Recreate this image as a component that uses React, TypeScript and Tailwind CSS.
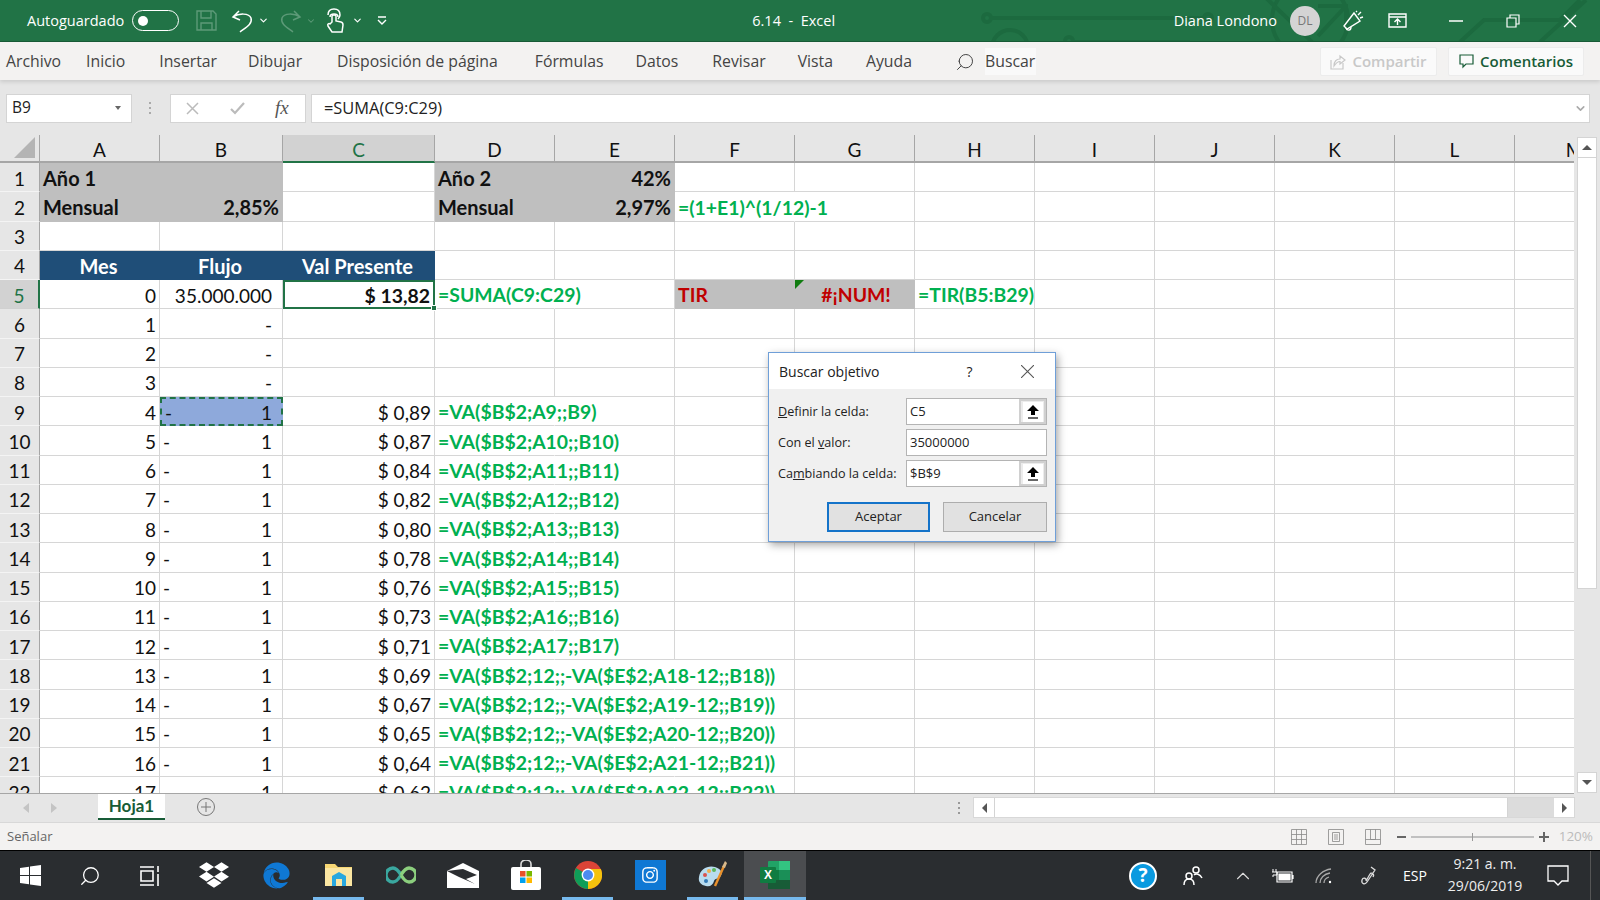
import type { ReactNode } from "react";
import { ChevronDown, ChevronUp, Search } from "lucide-react";
import { FaDropbox, FaEdge, FaInstagram } from "react-icons/fa";

const ui = "font-['Open_Sans',sans-serif]";
const sheetFont = "font-['Lato',sans-serif]";

const tabs = [
  { label: "Archivo", cls: "ml-[6px]" },
  { label: "Inicio", cls: "ml-[25px]" },
  { label: "Insertar", cls: "ml-[34px]" },
  { label: "Dibujar", cls: "ml-[31px]" },
  { label: "Disposición de página", cls: "ml-[35px]" },
  { label: "Fórmulas", cls: "ml-[37px]" },
  { label: "Datos", cls: "ml-[32px]" },
  { label: "Revisar", cls: "ml-[34px]" },
  { label: "Vista", cls: "ml-[32px]" },
  { label: "Ayuda", cls: "ml-[33px]" },
];

const columns = ["A", "B", "C", "D", "E", "F", "G", "H", "I", "J", "K", "L", "M"];
const gridCols = "grid-cols-[40px_120px_123px_152px_120px_120px_120px_120px_120px_120px_120px_120px_120px_120px]";

type Cell = { text?: ReactNode; cls?: string };

const green = "text-[#00b050] text-[19.4px] font-bold";
const grey = "bg-[#bfbfbf] border-[#bfbfbf]!";
const greyLabel = `${grey} text-[20px] font-bold`;
const navy = "bg-[#1f4e78] border-[#1f4e78]! text-white text-[20px] font-bold justify-center pr-[5px]";
const num = "justify-end pr-[3px]";
const noRight = "border-r-transparent!";

const cells: Record<string, Cell> = {
  A1: { text: "Año 1", cls: greyLabel },
  B1: { cls: grey },
  D1: { text: "Año 2", cls: greyLabel },
  E1: { text: "42%", cls: `${greyLabel} ${num}` },
  A2: { text: "Mensual", cls: greyLabel },
  B2: { text: "2,85%", cls: `${greyLabel} ${num}` },
  D2: { text: "Mensual", cls: greyLabel },
  E2: { text: "2,97%", cls: `${greyLabel} ${num}` },
  F2: { text: "=(1+E1)^(1/12)-1", cls: `${green} ${noRight}` },
  A4: { text: "Mes", cls: navy },
  B4: { text: "Flujo", cls: navy },
  C4: { text: "Val Presente", cls: navy },
  A5: { text: "0", cls: num },
  B5: { text: "35.000.000", cls: "justify-end pr-[10px]" },
  D5: { text: "=SUMA(C9:C29)", cls: `${green} ${noRight}` },
  F5: { text: "TIR", cls: `${grey} text-[#c00000] text-[19.4px] font-bold` },
  G5: {
    text: (
      <>
        <span className="absolute left-0 top-0 h-0 w-0 border-r-[9px] border-t-[9px] border-r-transparent border-t-[#107c10]" />
        #¡NUM!
      </>
    ),
    cls: `${grey} text-[#c00000] text-[19.4px] font-bold justify-center`,
  },
  H5: { text: "=TIR(B5:B29)", cls: green },
};

["1", "2", "3"].forEach((n, i) => {
  cells[`A${6 + i}`] = { text: n, cls: num };
  cells[`B${6 + i}`] = { text: "-", cls: "justify-end pr-[10px]" };
});

const presents = ["0,89", "0,87", "0,84", "0,82", "0,80", "0,78", "0,76", "0,73", "0,71", "0,69", "0,67", "0,65", "0,64", "0,62"];
presents.forEach((v, i) => {
  const r = 9 + i;
  cells[`A${r}`] = { text: String(4 + i), cls: num };
  cells[`B${r}`] = {
    text: (
      <>
        <span>-</span>
        <span>1</span>
      </>
    ),
    cls:
      r === 9
        ? "justify-between pr-[9px] bg-[#8ea9db] border-2! border-dashed! border-[#217346]!"
        : "justify-between pr-[10px]",
  };
  cells[`C${r}`] = { text: `$ ${v}`, cls: num };
  cells[`D${r}`] =
    r < 18
      ? { text: `=VA($B$2;A${r};;B${r})`, cls: `${green} ${noRight}` }
      : { text: `=VA($B$2;12;;-VA($E$2;A${r}-12;;B${r}))`, cls: `${green} ${noRight}` };
  if (r >= 18) cells[`E${r}`] = { cls: noRight };
});

function SheetGrid() {
  const rows = Array.from({ length: 22 }, (_, i) => i + 1);
  return (
    <div className={`h-full w-[1574px] overflow-hidden border-b border-[#a6a6a6] text-[19px] leading-none text-[#111] ${sheetFont}`}>
      <div className={`grid h-[28px] ${gridCols}`}>
        <div className="flex items-end justify-end border-b-2 border-r border-[#a6a6a6] bg-[#e6e6e6] pb-[3px] pr-[4px]">
          <div className="h-0 w-0 border-b-[21px] border-l-[21px] border-b-[#b4b4b4] border-l-transparent" />
        </div>
        {columns.map((c) => (
          <div
            key={c}
            className={
              c === "C"
                ? "flex items-center justify-center border-b-2 border-r border-b-[#217346] border-r-[#a6a6a6] bg-[#d2d2d2] pt-[2px] text-[#217346]"
                : "flex items-center justify-center border-b-2 border-r border-[#a6a6a6] bg-[#e6e6e6] pt-[2px]"
            }
          >
            {c}
          </div>
        ))}
      </div>
      {rows.map((r) => (
        <div key={r} className={`grid h-[29.26px] ${gridCols}`}>
          <div
            className={
              r === 5
                ? "flex items-center justify-center border-b border-r-2 border-b-[#d0d0d0] border-r-[#217346] bg-[#d2d2d2] pt-[2px] text-[#217346]"
                : "flex items-center justify-center border-b border-r border-b-[#f4f4f4] border-r-[#a6a6a6] bg-[#e6e6e6] pt-[2px]"
            }
          >
            {r}
          </div>
          {columns.map((c) => {
            const key = `${c}${r}`;
            const cell = cells[key];
            if (key === "C5") {
              return (
                <div key={key} className="relative z-10 flex items-center justify-end border-2 border-[#217346] pr-[3px] pt-[2px] text-[19.4px] font-bold">
                  $ 13,82
                  <span className="absolute bottom-[-4px] right-[-4px] h-[6px] w-[6px] border border-white bg-[#217346]" />
                </div>
              );
            }
            return (
              <div
                key={key}
                className={`relative flex items-center whitespace-nowrap border-b border-r border-[#d6d6d6] pl-[3px] pt-[2px] ${cell?.cls ?? ""}`}
              >
                {cell?.text}
              </div>
            );
          })}
        </div>
      ))}
    </div>
  );
}

function TitleBackdrop() {
  return (
    <svg className="absolute left-0 top-0 h-[41px] w-[1600px]" viewBox="0 0 1600 41" fill="none" stroke="#1c6a3f" strokeWidth="4">
      <circle cx="987" cy="18" r="4" />
      <path d="M991 18H1204" />
      <circle cx="1208" cy="18" r="4" />
      <circle cx="1010" cy="48" r="18" />
      <circle cx="1069" cy="41" r="4" />
      <path d="M1073 42H1190" />
      <circle cx="1310" cy="20" r="38" />
      <path d="M1264 -4 1312 42M1318 6H1346V34M1346 6 1318 36M1460 42 1484 20H1560L1580 0M1540 42 1586 0" />
    </svg>
  );
}

function QuickAccess() {
  return (
    <div className="relative flex items-center">
      <span className={`ml-[27px] text-[14.5px] text-white ${ui}`}>Autoguardado</span>
      <div className="ml-[8px] flex h-[21px] w-[47px] items-center rounded-full border-[1.5px] border-white pl-[5px]">
        <div className="h-[10px] w-[10px] rounded-full bg-white" />
      </div>
      <svg className="ml-[17px]" width="21" height="21" viewBox="0 0 21 21" fill="none" stroke="#5d9a78" strokeWidth="1.4">
        <path d="M1 1H17L20 4V20H1Z" />
        <path d="M5 1V8H15V1M5 20V13H16V20" />
      </svg>
      <svg className="ml-[14px]" width="23" height="24" viewBox="0 0 23 24" fill="none" stroke="#fff" strokeWidth="1.5">
        <path d="M8 2 2 8 9 11M2 8C8 4 18 4 20 9 22 15 14 19 9 23" />
      </svg>
      <ChevronDown className="ml-[4px]" size={11} color="#fff" strokeWidth={2.5} />
      <svg className="ml-[10px]" width="23" height="24" viewBox="0 0 23 24" fill="none" stroke="#5d9a78" strokeWidth="1.5">
        <path d="M15 2 21 8 14 11M21 8C15 4 5 4 3 9 1 15 9 19 14 23" />
      </svg>
      <ChevronDown className="ml-[4px]" size={10} color="#5d9a78" strokeWidth={2.5} />
      <svg className="ml-[9px]" width="20" height="25" viewBox="0 0 20 25" fill="none" stroke="#fff" strokeWidth="1.5">
        <path d="M3 7C3 3 5 1 9 1S15 3 15 7C15 9 14 10 13 11" />
        <path d="M5 9C5 5 13 5 13 9" />
        <path d="M7 14V8C7 6.5 11 6.5 11 8V13L16 14C18 14.5 18 16 18 17L17 24H7L3 18C2 16 4 15 5 16Z" />
      </svg>
      <ChevronDown className="ml-[7px]" size={11} color="#fff" strokeWidth={2.5} />
      <svg className="ml-[14px]" width="10" height="10" viewBox="0 0 10 10" fill="none" stroke="#fff" strokeWidth="1.4">
        <path d="M1 1H9M1 4 5 8 9 4" />
      </svg>
    </div>
  );
}

function TitleBar() {
  return (
    <div className="relative flex h-[42px] shrink-0 items-center overflow-hidden border-b border-[#185c37] bg-[#217346]">
      <TitleBackdrop />
      <QuickAccess />
      <span className={`relative ml-[365px] whitespace-pre text-[14.5px] text-white ${ui}`}>6.14  -  Excel</span>
      <div className="relative ml-auto flex items-center">
        <span className={`text-[14.5px] text-white ${ui}`}>Diana Londono</span>
        <div className={`ml-[13px] flex h-[30px] w-[30px] items-center justify-center rounded-full bg-[#d4d4d4] text-[12px] text-[#777] ${ui}`}>DL</div>
        <svg className="ml-[22px]" width="22" height="22" viewBox="0 0 22 22" fill="none" stroke="#fff" strokeWidth="1.4">
          <path d="M12 3 18 11 5 19 2 16Z" />
          <path d="M4 18C5 21 9 21 9 17M16 5 19 2M18 8 21 7M14 2 15 1" />
        </svg>
        <svg className="ml-[24px]" width="19" height="15" viewBox="0 0 19 15" fill="none" stroke="#fff" strokeWidth="1.4">
          <path d="M1 1H18V14H1ZM1 4H18M9.5 12V6M6.5 9 9.5 6 12.5 9" />
        </svg>
        <svg className="ml-[42px]" width="14" height="2" viewBox="0 0 14 2">
          <path d="M0 1H14" stroke="#fff" strokeWidth="1.5" />
        </svg>
        <svg className="ml-[43px]" width="14" height="14" viewBox="0 0 14 14" fill="none" stroke="#fff" strokeWidth="1.2">
          <path d="M1 4H10V13H1ZM4 4V1H13V10H10" />
        </svg>
        <svg className="ml-[43px] mr-[23px]" width="14" height="14" viewBox="0 0 14 14" fill="none" stroke="#fff" strokeWidth="1.4">
          <path d="M1 1 13 13M13 1 1 13" />
        </svg>
      </div>
    </div>
  );
}

function TabsBar() {
  return (
    <div className={`relative z-10 flex h-[38px] shrink-0 items-center bg-[#f3f2f1] pt-[1px] text-[15.8px] text-[#444] shadow-[0_2px_4px_rgba(0,0,0,0.12)] ${ui}`}>
      {tabs.map((t) => (
        <span key={t.label} className={t.cls}>
          {t.label}
        </span>
      ))}
      <Search className="ml-[43px] -scale-x-100" size={20} color="#444" strokeWidth={1.2} />
      <span className="ml-[10px] bg-[#f9f9f9] py-[2px] pr-[1px]">Buscar</span>
      <button className="ml-auto flex h-[29px] w-[117px] items-center justify-center gap-[6px] rounded-[2px] border border-[#ececec] bg-[#fafafa] text-[15px] font-semibold text-[#c8c8c8]">
        <svg width="16" height="16" viewBox="0 0 16 16" fill="none" stroke="#c8c8c8" strokeWidth="1.2">
          <path d="M1 6V15H13V9M4 12C4 7 7 5 10 5V2L15 6 10 10V7.5C8 7.5 6 9 4 12Z" />
        </svg>
        Compartir
      </button>
      <button className="ml-[11px] mr-[16px] flex h-[29px] w-[136px] items-center justify-center gap-[6px] rounded-[2px] border border-[#ececec] bg-[#fafafa] text-[15px] font-semibold text-[#185c37]">
        <svg width="15" height="15" viewBox="0 0 15 15" fill="none" stroke="#185c37" strokeWidth="1.2">
          <path d="M1 1H14V10H7L4 13V10H1Z" />
        </svg>
        Comentarios
      </button>
    </div>
  );
}

function FormulaBar() {
  return (
    <div className={`flex h-[55px] shrink-0 items-center bg-[#e6e6e6] pt-[1px] ${ui}`}>
      <div className="ml-[6px] flex h-[29px] w-[126px] items-center border border-[#d4d4d4] bg-white pl-[5px] text-[15.5px] text-[#222]">
        B9
        <span className="ml-auto mr-[10px] h-0 w-0 border-x-[3px] border-t-[4px] border-x-transparent border-t-[#666]" />
      </div>
      <div className="ml-[17px] flex flex-col gap-[3px]">
        <span className="h-[2px] w-[2px] bg-[#aaa]" />
        <span className="h-[2px] w-[2px] bg-[#aaa]" />
        <span className="h-[2px] w-[2px] bg-[#aaa]" />
      </div>
      <div className="ml-[19px] flex h-[29px] w-[136px] items-center border border-[#d4d4d4] bg-white">
        <svg className="ml-[15px]" width="13" height="13" viewBox="0 0 13 13" stroke="#bbb" strokeWidth="1.5">
          <path d="M1 1 12 12M12 1 1 12" />
        </svg>
        <svg className="ml-[31px]" width="15" height="13" viewBox="0 0 15 13" fill="none" stroke="#bbb" strokeWidth="2.2">
          <path d="M1 7 5 11 14 1" />
        </svg>
        <span className="ml-[30px] font-['Liberation_Serif',serif] text-[19px] italic text-[#555]">fx</span>
      </div>
      <div className="ml-[5px] flex h-[29px] w-[1279px] items-center border border-[#d4d4d4] bg-white pl-[12px] text-[16.4px] text-[#222]">
        =SUMA(C9:C29)
        <ChevronDown className="ml-auto mr-[2px]" size={13} color="#aaa" strokeWidth={3} />
      </div>
    </div>
  );
}

function VerticalScroll() {
  return (
    <div className="flex h-full flex-1 flex-col items-center bg-[#e6e6e6] pt-[2px]">
      <div className="flex h-[21px] w-[20px] items-center justify-center border border-[#d4d4d4] bg-white">
        <span className="h-0 w-0 border-x-[5px] border-b-[5px] border-x-transparent border-b-[#555]" />
      </div>
      <div className="h-[431px] w-[20px] border-x border-b border-[#d4d4d4] bg-white" />
      <div className="mb-[1px] mt-auto flex h-[21px] w-[20px] items-center justify-center border border-[#d4d4d4] bg-white">
        <span className="h-0 w-0 border-x-[5px] border-t-[5px] border-x-transparent border-t-[#555]" />
      </div>
    </div>
  );
}

function ArrowButton() {
  return (
    <div className="flex h-[25px] w-[27px] items-center justify-center border-2 border-[#d0d0d0] bg-[#ececec]">
      <div className="flex h-[20px] w-[20px] items-center justify-center bg-white">
        <svg width="12" height="14" viewBox="0 0 12 14">
          <path d="M6 0 12 6H8V10H4V6H0Z" fill="#000" />
          <path d="M1 13H11" stroke="#000" strokeWidth="1.2" />
        </svg>
      </div>
    </div>
  );
}

function GoalSeekDialog() {
  return (
    <div className={`absolute left-[768px] top-[352px] z-20 h-[190px] w-[288px] border border-[#6f9fd8] bg-[#f0f0f0] text-[12.6px] text-[#222] shadow-[2px_3px_8px_rgba(0,0,0,0.35)] ${ui}`}>
      <div className="flex h-[36px] items-center bg-white pl-[10px] text-[14px]">
        Buscar objetivo
        <span className="ml-[87px] text-[14px]">?</span>
        <svg className="ml-[48px]" width="13" height="13" viewBox="0 0 13 13" stroke="#555" strokeWidth="1.1">
          <path d="M0 0 13 13M13 0 0 13" />
        </svg>
      </div>
      <div className="flex flex-col gap-[4px] pl-[9px] pr-[8px] pt-[9px]">
        <div className="flex h-[27px] items-center">
          <span className="w-[128px] pt-[2px]"><u>D</u>efinir la celda:</span>
          <div className="flex h-full flex-1 items-center border border-[#b4b4b4] bg-white pl-[3px] text-[13px]">
            C5
            <div className="ml-auto"><ArrowButton /></div>
          </div>
        </div>
        <div className="flex h-[27px] items-center">
          <span className="w-[128px] pt-[2px]">Con el <u>v</u>alor:</span>
          <div className="flex h-full flex-1 items-center border border-[#b4b4b4] bg-white pl-[3px] text-[13px]">35000000</div>
        </div>
        <div className="flex h-[27px] items-center">
          <span className="w-[128px] pt-[2px]">Ca<u>m</u>biando la celda:</span>
          <div className="flex h-full flex-1 items-center border border-[#b4b4b4] bg-white pl-[3px] text-[13px]">
            $B$9
            <div className="ml-auto"><ArrowButton /></div>
          </div>
        </div>
        <div className="mt-[11px] flex justify-end gap-[13px] text-[13px]">
          <button className="h-[30px] w-[103px] border-2 border-[#1473c9] bg-[#e1e1e1]">Aceptar</button>
          <button className="h-[30px] w-[104px] border border-[#adadad] bg-[#e1e1e1]">Cancelar</button>
        </div>
      </div>
    </div>
  );
}

function SheetTabs() {
  return (
    <div className={`flex h-[29px] shrink-0 items-start border-b border-[#d8d8d8] bg-[#e6e6e6] ${ui}`}>
      <svg className="ml-[23px] mt-[9px]" width="6" height="10" viewBox="0 0 6 10" fill="#c4c4c4">
        <path d="M6 0V10L0 5Z" />
      </svg>
      <svg className="ml-[22px] mt-[9px]" width="6" height="10" viewBox="0 0 6 10" fill="#c4c4c4">
        <path d="M0 0V10L6 5Z" />
      </svg>
      <div className={`ml-[41px] flex h-[26px] w-[67px] items-center justify-center border-b-2 border-[#185c37] bg-white text-[17px] font-bold text-[#185c37] ${sheetFont}`}>
        Hoja1
      </div>
      <div className="ml-[32px] mt-[4px] flex h-[18px] w-[18px] items-center justify-center rounded-full border border-[#777]">
        <svg width="10" height="10" viewBox="0 0 10 10" stroke="#777" strokeWidth="1">
          <path d="M5 0V10M0 5H10" />
        </svg>
      </div>
      <div className="ml-[743px] mt-[8px] flex flex-col gap-[3px]">
        <span className="h-[2px] w-[2px] bg-[#999]" />
        <span className="h-[2px] w-[2px] bg-[#999]" />
        <span className="h-[2px] w-[2px] bg-[#999]" />
      </div>
      <div className="ml-[13px] mt-[3px] flex h-[21px] w-[602px] items-stretch border border-[#d8d8d8] bg-[#dcdcdc]">
        <div className="flex w-[20px] items-center justify-center bg-white">
          <span className="h-0 w-0 border-y-[5px] border-r-[5px] border-y-transparent border-r-[#555]" />
        </div>
        <div className="w-[514px] border-x border-[#d4d4d4] bg-white" />
        <div className="ml-auto flex w-[20px] items-center justify-center bg-white">
          <span className="h-0 w-0 border-y-[5px] border-l-[5px] border-y-transparent border-l-[#555]" />
        </div>
      </div>
    </div>
  );
}

function StatusBar() {
  return (
    <div className={`flex h-[27px] shrink-0 items-center bg-[#f3f2f1] text-[13px] text-[#666] ${ui}`}>
      <span className="ml-[7px]">Señalar</span>
      <div className="ml-auto flex items-center">
        <svg width="16" height="16" viewBox="0 0 16 16" fill="none" stroke="#888" strokeWidth="0.8">
          <path d="M.5.5H15.5V15.5H.5ZM.5 5.5H15.5M.5 10.5H15.5M5.5.5V15.5M10.5.5V15.5" />
        </svg>
        <svg className="ml-[21px]" width="16" height="16" viewBox="0 0 16 16" fill="none" stroke="#888" strokeWidth="0.8">
          <path d="M.5.5H15.5V15.5H.5ZM4.5 3.5H11.5V12.5H4.5ZM6 6H10M6 8H10M6 10H10" />
        </svg>
        <svg className="ml-[21px]" width="16" height="16" viewBox="0 0 16 16" fill="none" stroke="#888" strokeWidth="0.8">
          <path d="M.5.5H15.5V15.5H.5ZM.5 10.5H15.5M5.5.5V10.5M10.5.5V10.5H5.5" />
        </svg>
        <span className="ml-[16px] h-[2px] w-[9px] bg-[#666]" />
        <div className="relative ml-[5px] h-[2px] w-[123px] bg-[#c0c0c0]">
          <span className="absolute left-[61px] top-[-3px] h-[8px] w-[1px] bg-[#999]" />
        </div>
        <svg className="ml-[5px]" width="10" height="10" viewBox="0 0 10 10" stroke="#666" strokeWidth="2">
          <path d="M5 0V10M0 5H10" />
        </svg>
        <span className="ml-[10px] mr-[7px] text-[13.5px] text-[#bbb]">120%</span>
      </div>
    </div>
  );
}

function ChromeIcon() {
  return (
    <svg width="28" height="28" viewBox="0 0 28 28">
      <circle cx="14" cy="14" r="14" fill="#db4437" />
      <path d="M14 14 14 28A14 14 0 0 1 2 7Z" fill="#0f9d58" />
      <path d="M14 8H26.8A14 14 0 0 1 14 28Z" fill="#f4c20d" />
      <circle cx="14" cy="14" r="6.4" fill="#fff" />
      <circle cx="14" cy="14" r="5" fill="#4d8bf0" />
    </svg>
  );
}

const taskIcons: { key: string; icon: ReactNode; cls?: string; bar?: string }[] = [
  { key: "dropbox", icon: <FaDropbox size={30} color="#fff" /> },
  { key: "edge", icon: <FaEdge size={27} color="#0f78d4" /> },
  {
    key: "explorer",
    bar: "w-[51px]",
    icon: (
      <svg width="28" height="24" viewBox="0 0 28 24">
        <path d="M0 1H10L13 4H27V23H0Z" fill="#f7d774" />
        <path d="M0 5H27V23H0Z" fill="#fbe6a2" />
        <path d="M7 23V13L14 9 21 13V23H17V16H11V23Z" fill="#29a8df" />
      </svg>
    ),
  },
  {
    key: "infinity",
    icon: (
      <svg width="30" height="18" viewBox="0 0 30 18" fill="none" strokeWidth="3.4">
        <path d="M15 9C12 4 9 2 7 2A7 7 0 0 0 7 16C9 16 12 14 15 9" stroke="#3aa8a0" />
        <path d="M15 9C18 4 21 2 23 2A7 7 0 0 1 23 16C21 16 18 14 15 9" stroke="#8ccf7e" />
      </svg>
    ),
  },
  {
    key: "mail",
    icon: (
      <svg width="32" height="25" viewBox="0 0 32 25">
        <path d="M0 8 16 0 32 8V25H0Z" fill="#fff" />
        <path d="M0 8 16 6 30 12 19 16 28 21 12 14Z" fill="#2b2d30" />
      </svg>
    ),
  },
  {
    key: "store",
    icon: (
      <svg width="30" height="30" viewBox="0 0 30 30">
        <path d="M10 8V4A5 4 0 0 1 20 4V8" fill="none" stroke="#ddd" strokeWidth="1.6" />
        <rect x="0" y="7" width="30" height="23" rx="2" fill="#fff" />
        <rect x="9" y="11" width="5.5" height="5.5" fill="#e8502a" />
        <rect x="15.5" y="11" width="5.5" height="5.5" fill="#7ab800" />
        <rect x="9" y="17.5" width="5.5" height="5.5" fill="#00a1ef" />
        <rect x="15.5" y="17.5" width="5.5" height="5.5" fill="#ffb900" />
      </svg>
    ),
  },
  { key: "chrome", bar: "w-[51px]", icon: <ChromeIcon /> },
  {
    key: "camera",
    icon: (
      <div className="flex h-[30px] w-[31px] items-center justify-center bg-[#0f78d4]">
        <FaInstagram size={18} color="#fff" />
      </div>
    ),
  },
  {
    key: "paint",
    bar: "w-[51px]",
    icon: (
      <svg width="30" height="30" viewBox="0 0 30 30">
        <path d="M1 17C2 9 10 5 17 7 24 9 25 14 22 17 20 19 17 18 16 21 15 25 12 27 8 26 3 25 0 22 1 17Z" fill="#b9dcef" />
        <circle cx="7" cy="15" r="2" fill="#d9534f" />
        <circle cx="11" cy="11" r="2" fill="#f0ad4e" />
        <circle cx="16" cy="10" r="2" fill="#5cb85c" />
        <circle cx="8" cy="21" r="2" fill="#337ab7" />
        <path d="M17 26 26 6" stroke="#e9902b" strokeWidth="2.4" />
        <path d="M24 7 27 1 29 3 27 8Z" fill="#d9b98a" />
      </svg>
    ),
  },
  {
    key: "excel",
    cls: "bg-[#4b4d50]",
    bar: "w-full",
    icon: (
      <svg width="30" height="28" viewBox="0 0 30 28">
        <rect x="8" y="0" width="22" height="28" rx="1" fill="#21a366" />
        <rect x="19" y="0" width="11" height="9" fill="#33c481" />
        <rect x="8" y="9" width="11" height="10" fill="#107c41" />
        <rect x="19" y="9" width="11" height="10" fill="#1a8f57" />
        <rect x="8" y="19" width="22" height="9" fill="#185c37" />
        <rect x="0" y="6" width="16" height="16" rx="1" fill="#107c41" />
        <text x="8" y="18" textAnchor="middle" fontSize="12" fontWeight="700" fill="#fff" fontFamily="Liberation Sans, sans-serif">X</text>
      </svg>
    ),
  },
];

function Taskbar() {
  return (
    <div className={`flex h-[50px] shrink-0 items-stretch border-t border-black bg-[#2a2d30] text-white ${ui}`}>
      <div className="flex w-[60px] items-center justify-center">
        <svg width="21" height="21" viewBox="0 0 21 21" fill="#fff">
          <path d="M0 3 9 1.8V10H0ZM10 1.6 21 0V10H10ZM0 11H9V19.2L0 18ZM10 11H21V21L10 19.4Z" />
        </svg>
      </div>
      <div className="flex w-[60px] items-center justify-center">
        <Search className="-scale-x-100" size={22} color="#fff" strokeWidth={1.4} />
      </div>
      <div className="flex w-[60px] items-center justify-center">
        <svg width="20" height="20" viewBox="0 0 20 20" fill="none" stroke="#fff" strokeWidth="1.6">
          <path d="M0 1H14M0 19H14M1 5H13V15H1ZM18 0V6M18 8V20" />
        </svg>
      </div>
      <div className="ml-[3px] flex">
        {taskIcons.map((t) => (
          <div key={t.key} className={`relative flex w-[62.3px] items-center justify-center pb-[1px] ${t.cls ?? ""}`}>
            {t.icon}
            {t.bar && <span className={`absolute bottom-0 h-[3px] bg-[#76b9ed] ${t.bar}`} />}
          </div>
        ))}
      </div>
      <div className="ml-auto flex items-center">
        <div className="flex w-[50px] justify-center">
          <div className="flex h-[28px] w-[28px] items-center justify-center rounded-full border-[2px] border-white bg-[#0a9ae0] text-[19px] font-bold leading-none">?</div>
        </div>
        <div className="flex w-[50px] justify-center">
          <svg width="20" height="20" viewBox="0 0 20 20" fill="none" stroke="#fff" strokeWidth="1.5">
            <circle cx="13" cy="4" r="3" />
            <circle cx="6" cy="10" r="3" />
            <path d="M1 19C1 15 3 13 6 13S11 15 11 19M11 9C13 7 17 8 19 12" />
          </svg>
        </div>
        <div className="flex w-[50px] justify-center">
          <ChevronUp size={22} color="#ddd" strokeWidth={1.2} />
        </div>
        <div className="flex w-[30px] justify-center">
          <svg width="22" height="14" viewBox="0 0 22 14" fill="none" stroke="#fff" strokeWidth="1.2">
            <path d="M5 3H20V13H5ZM21 6V10" />
            <path d="M7 5H18V11H7Z" fill="#fff" />
            <path d="M1 0V3M4 0V3M0 3H5V6H1V8" strokeWidth="1" />
          </svg>
        </div>
        <div className="flex w-[52px] justify-center">
          <svg width="18" height="16" viewBox="0 0 18 16" fill="none" stroke="#aaa" strokeWidth="1.3">
            <path d="M1 15C1 8 8 2 16 1M5 15C5 10 9 6 15 5M9 15C9 12 11 10 14 9" />
            <circle cx="15" cy="14" r="1.2" fill="#fff" stroke="none" />
          </svg>
        </div>
        <div className="flex w-[36px] justify-center">
          <svg width="18" height="20" viewBox="0 0 18 20" fill="none" stroke="#ddd" strokeWidth="1.3">
            <path d="M12 1 16 4 8 16C6 19 2 18 3 14 4 11 8 12 7 15L11 8C12 6 16 8 14 11" />
          </svg>
        </div>
        <span className="w-[58px] text-center text-[14px]">ESP</span>
        <div className="flex w-[82px] flex-col items-center gap-[3px] pb-[2px] text-[14px] leading-[19px] text-[#eee]">
          <span>9:21 a. m.</span>
          <span>29/06/2019</span>
        </div>
        <div className="flex w-[64px] justify-center">
          <svg width="22" height="22" viewBox="0 0 22 22" fill="none" stroke="#fff" strokeWidth="1.3">
            <path d="M1 1H21V16H15L11 20 7 16H1Z" />
          </svg>
        </div>
        <span className="h-full w-[1px] bg-[#555]" />
        <span className="w-[9px]" />
      </div>
    </div>
  );
}

export default function App() {
  return (
    <div className="relative flex h-[900px] w-[1600px] flex-col overflow-hidden bg-white">
      <TitleBar />
      <TabsBar />
      <FormulaBar />
      <div className="flex h-[659px] shrink-0">
        <SheetGrid />
        <VerticalScroll />
      </div>
      <SheetTabs />
      <StatusBar />
      <Taskbar />
      <GoalSeekDialog />
    </div>
  );
}
